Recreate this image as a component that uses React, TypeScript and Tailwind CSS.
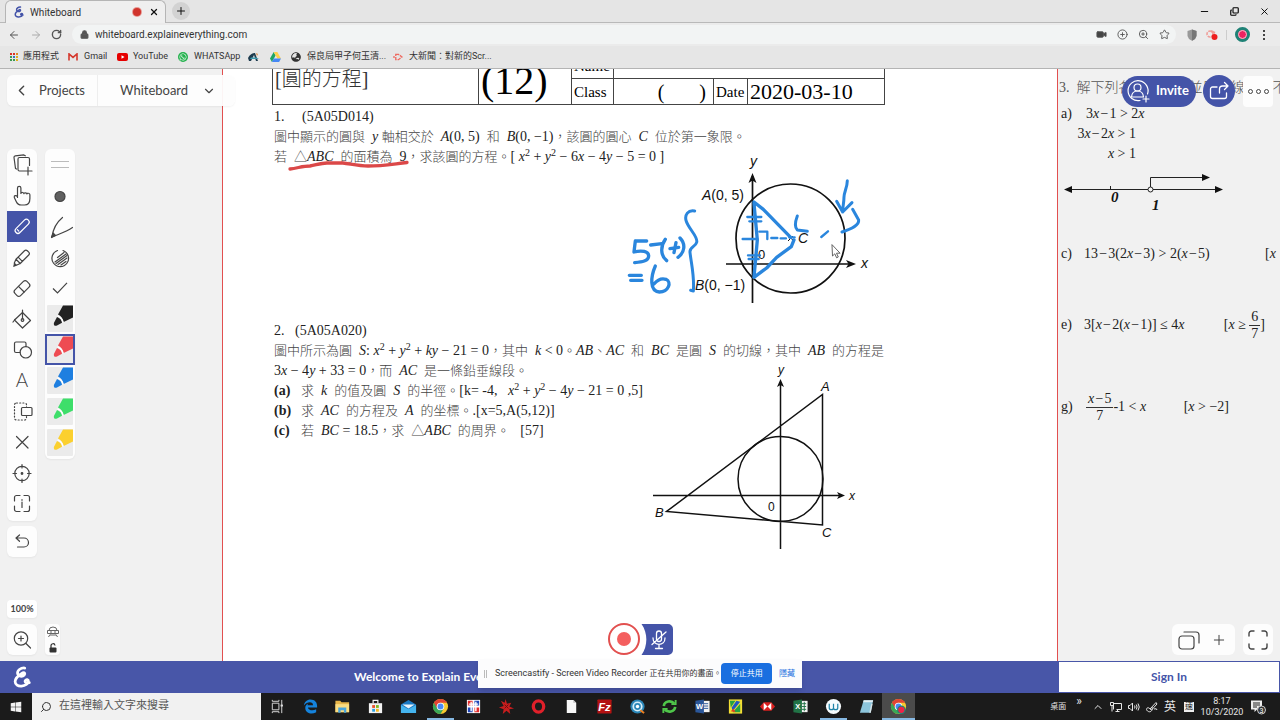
import React from "react";
import {
  ArrowLeft,
  ArrowRight,
  ChevronDown,
  ChevronLeft,
  ChevronUp,
  CirclePlus,
  Copy,
  Lock,
  Minus,
  Plus,
  RotateCw,
  Search,
  Star,
  Video,
  X,
  ZoomIn,
} from "lucide-react";
import { FaGlobeAsia, FaWhatsapp, FaWindows } from "react-icons/fa";

/* ---------- shared bits ---------- */

const I = ({ children }: { children: React.ReactNode }) => <i className="italic">{children}</i>;

// Chinese runs are set a touch smaller and lighter than the Latin text around them
const Zh = ({ children }: { children: React.ReactNode }) => <span className="text-[13px] text-[#444]">{children}</span>;

const Sq = () => <sup className="text-[10px]">2</sup>;

// minus sign with hair spaces
const Mn = () => <>{"\u200a−\u200a"}</>;

function Swirl({ className }: { className: string }) {
  return (
    <svg viewBox="0 0 20 24" className={className} fill="none" stroke="currentColor" strokeWidth="3" strokeLinecap="round">
      <path d="M13 2.200C8.500 1.800 4.600 5 5.200 8.300c.5 3 5 4 7.300 1.500 1.300-1.600 0-3.200-1.500-2.400C7.500 9.500 2.500 12.500 2.500 17c0 3.500 3.200 5.200 7 4.900 4-.3 7.500-2.800 7.500-5.400 0-1.800-2.300-2.200-3.300-.6-.9 1.500.4 2.900 4.300 2.300" />
    </svg>
  );
}

function ChromeLogo({ className }: { className?: string }) {
  return (
    <svg viewBox="0 0 18 18" className={className}>
      <circle cx="9" cy="9" r="8" fill="#f7c92f" />
      <path d="M2.070 5A8 8 0 0 0 9 17l3.500-6L9 9z" fill="#3aa757" />
      <path d="M9 5h6.930A8 8 0 0 0 2.070 5l3.500 6z" fill="#e24435" />
      <circle cx="9" cy="9" r="4" fill="#fff" />
      <circle cx="9" cy="9" r="3.100" fill="#4a8af4" />
    </svg>
  );
}

/* ---------- browser ---------- */

function TabStrip() {
  return (
    <div className="flex h-[23px] items-end justify-between border-b border-[#b9b9b9] bg-[#e5e5e5]">
      <div className="flex items-center gap-1.5 pl-[5px]">
        <div className="-mb-px flex h-[23px] w-[161px] items-center rounded-t-md border border-b-0 border-[#b5b5b5] bg-[#efefef] pl-2 pr-1.5">
          <Swirl className="h-3 w-2.5 text-[#4353a8]" />
          <span className="ml-1.5 flex-1 text-[10px] text-[#333]">Whiteboard</span>
          <span className="mr-2 flex size-2 items-center justify-center rounded-full bg-[#d0342c] ring-1 ring-[#e79a95]" />
          <button aria-label="Close tab"><X size={10} strokeWidth={3} color="#111" /></button>
        </div>
        <button aria-label="New tab" className="flex size-[18px] items-center justify-center rounded-full bg-[#d2d2d2]">
          <Plus size={12} strokeWidth={2} color="#111" />
        </button>
      </div>
      <div className="flex h-full items-center gap-5 pr-2.5">
        <button aria-label="Minimize"><Minus size={11} strokeWidth={2} /></button>
        <button aria-label="Restore"><Copy size={9} strokeWidth={3} className="-scale-x-100 rotate-180" /></button>
        <button aria-label="Close"><X size={11} strokeWidth={2} /></button>
      </div>
    </div>
  );
}

function AddressBar() {
  return (
    <div className="flex h-[23px] items-center bg-[#ebebeb] pl-2 pr-2.5 text-[#555]">
      <button aria-label="Back" className="w-[22px]"><ArrowLeft size={12} /></button>
      <button aria-label="Forward" className="w-[21px]"><ArrowRight size={12} color="#aaa" /></button>
      <button aria-label="Reload" className="w-[21px]"><RotateCw size={11} strokeWidth={3} /></button>
      <label className="flex h-[19px] flex-1 items-center rounded-full bg-[#f2f4f4] pl-2">
        <Lock size={9} fill="#555" strokeWidth={3} />
        <input
          aria-label="Address"
          defaultValue="whiteboard.explaineverything.com"
          className="ml-1.5 flex-1 bg-transparent text-[10px] text-[#333] outline-none"
        />
        <span className="flex items-center gap-[10px] pr-1.5">
          <Video size={11} fill="#444" />
          <CirclePlus size={11} />
          <ZoomIn size={11} />
          <Star size={11} />
        </span>
      </label>
      <div className="ml-2.5 flex items-center gap-2">
        <svg viewBox="0 0 12 12" className="size-3"><path d="M6 .5 10.500 2v5L9 10l-3 1.800L3 10 1.500 7V2z" fill="#999" /><path d="M6 .5v11.300L9 10l1.500-3V2z" fill="#777" /></svg>
        <svg viewBox="0 0 12 12" className="size-3"><circle cx="4" cy="5" r="3" fill="none" stroke="#f09a95" strokeWidth="1.500" strokeDasharray="3 1" /><path d="m5 2 4 2" stroke="#f09a95" strokeWidth="2" /><circle cx="8.500" cy="8" r="3" fill="#ee1c1c" /></svg>
        <span className="h-2.5 w-px bg-[#ccc]" />
        <span className="size-[15px] rounded-full border-[3px] border-[#1f8276] bg-[#ee2260] outline-1 -outline-offset-4 outline-[#f5c5cf]" />
        <button aria-label="Menu" className="flex w-3 flex-col items-center gap-0.5">
          <span className="size-0.5 bg-[#444]" /><span className="size-0.5 bg-[#444]" /><span className="size-0.5 bg-[#444]" />
        </button>
      </div>
    </div>
  );
}

const DOTS = ["#d93025", "#d93025", "#e08a20", "#3a9a50", "#3a70c0", "#e0b020", "#3a9a50", "#3a9a50", "#e0b020"];

function Bookmarks() {
  return (
    <nav className="flex h-[23px] items-center whitespace-nowrap border-b border-[#b4b4b4] bg-[#e6e6e6] pl-2.5 text-[9px] text-[#333]">
      <a href="#apps" className="flex w-[58px] items-center gap-[5px]">
        <span className="grid grid-cols-3 gap-px">
          {DOTS.map((c, i) => <span key={i} className="size-0.5" style={{ background: c }} />)}
        </span>
        應用程式
      </a>
      <a href="#gmail" className="flex w-[49px] items-center gap-1.5">
        <svg viewBox="0 0 11 9" className="h-2 w-2.5"><path d="M1 8.500V1l4.500 4L10 1v7.500" fill="none" stroke="#d5392e" strokeWidth="1.800" /></svg>
        Gmail
      </a>
      <a href="#youtube" className="flex w-[61px] items-center gap-[5px]">
        <svg viewBox="0 0 11 8" className="h-2 w-[11px]"><rect width="11" height="8" rx="2" fill="#e60000" /><path d="M4.500 2.300 7.500 4l-3 1.700z" fill="#fff" /></svg>
        YouTube
      </a>
      <a href="#whatsapp" className="flex w-[70px] items-center gap-1.5">
        <span className="flex size-[10px] items-center justify-center rounded-full bg-[#22b14c]"><FaWhatsapp size={8} color="#fff" /></span>
        WHATSApp
      </a>
      <a href="#class" aria-label="Class" className="w-[22px]">
        <svg viewBox="0 0 12 10" className="h-2.5 w-3"><path d="M0 6c2-4 5-5 7-5l3 8H8L6 3 3 9H1z" fill="#1d3b4e" /><path d="M3 5.500h5l3 1.500H2z" fill="#3e9cb0" /><path d="m8 1 2 1-1 2z" fill="#e08a40" /></svg>
      </a>
      <a href="#drive" aria-label="Drive" className="w-[21px]">
        <svg viewBox="0 0 11 10" className="h-2.5 w-[11px]"><path d="M3.700 0 0 6.500 1.900 10l3.700-6.600z" fill="#1fa463" /><path d="M3.700 0h3.600L11 6.500H7.400z" fill="#ffd04b" /><path d="m1.900 10 1.900-3.500H11L9.100 10z" fill="#4688f4" /></svg>
      </a>
      <a href="#school" className="flex w-[102px] items-center gap-1.5"><FaGlobeAsia size={10} /> 保良局甲子何玉清...</a>
      <a href="#news" className="flex items-center gap-1.5">
        <svg viewBox="0 0 11 9" className="h-2 w-2.5" fill="none" stroke="#ee6a60" strokeWidth="1.500"><path d="M3 1.500h3l4 3-4 3H3z" strokeDasharray="4 1" /><path d="M0 4.500h2" /></svg>
        大新聞：對新的Scr...
      </a>
    </nav>
  );
}

/* ---------- tool palettes ---------- */

const TOOLS: { name: string; icon: React.ReactNode }[] = [
  { name: "Add", icon: <path d="M22.500 16.500V10A1.500 1.500 0 0 0 21 8.500h-8.500A1.500 1.500 0 0 0 11 10v10.500a1.500 1.500 0 0 0 1.500 1.500H17M9.500 20l-1-.5L7 8.500A1.500 1.500 0 0 1 8.300 6.900l8.500-1 1.500.9M21 18v8M17 22h8" /> },
  { name: "Hand", icon: <path d="M10.500 17.500V8a1.700 1.700 0 0 1 3.400 0v5.500c0-1.500 3-1.300 3 .2 0-1.200 3-1.200 3 .3 0-1.200 3-1 3 .8v3.700c0 4-2.200 6.500-5.400 6.500h-3c-2.800 0-4.300-1-5.300-3.500l-1.900-4c-.4-2 1.400-2.500 3.200-1" /> },
  { name: "Pencil", icon: <g transform="rotate(-45 15 15.500)"><rect x="6.500" y="12.700" width="17.500" height="5.600" rx="2.800" /><path d="M9.500 14.500v2" /></g> },
  { name: "Highlighter", icon: <g transform="rotate(-45 15 15.500)"><path d="M9.500 12.500h12a2 2 0 0 1 2 2v2a2 2 0 0 1-2 2h-12zM9.500 12.500l-4 1.500v3l4 1.500M12.500 12.500v6M5.500 14.500 3 16l2.500 .8" /></g> },
  { name: "Eraser", icon: <g transform="rotate(-45 15 15.500)"><rect x="6.500" y="11.500" width="17" height="8" rx="2.500" /><path d="M14 11.500v8" /></g> },
  { name: "Fill", icon: <><path d="M15.500 8.500 23.500 16.500 15.500 24 7.500 16z" /><path d="M15.500 6v9M8 15.500l-2 2.500" /><circle cx="15.500" cy="16" r="1.300" /></> },
  { name: "Shapes", icon: <><path d="M13 17.500H9A1.500 1.500 0 0 1 7.500 16V8.500A1.500 1.500 0 0 1 9 7h8.500A1.500 1.500 0 0 1 19 8.500v3" /><circle cx="18.800" cy="17.300" r="5.700" /></> },
  { name: "Text", icon: <text x="15" y="20.500" textAnchor="middle" fontSize="19" fill="currentColor" stroke="none" fontFamily="Lato" fontWeight="300">A</text> },
  { name: "Select", icon: <><rect x="7.500" y="6" width="12" height="17" rx="2" strokeDasharray="1 2.200" /><rect x="14.500" y="10.500" width="10.500" height="8" rx="1" fill="#fdfdfd" /></> },
  { name: "Delete", icon: <path d="m9.500 8.500 11.500 11.500M21 8.500 9.500 20" /> },
  { name: "Laser", icon: <><circle cx="15" cy="14.500" r="7.200" /><path d="M15 5.500V9M15 20v3.500M6 14.500h3.500M20.500 14.500H24" /><circle cx="15" cy="14.500" r=".8" fill="currentColor" /></> },
  { name: "Inspector", icon: <><path d="M7.500 11V7.500a2 2 0 0 1 2-2H13M17 5.500h3.500a2 2 0 0 1 2 2V11M22.500 16v3.500a2 2 0 0 1-2 2H17M13 21.500H9.500a2 2 0 0 1-2-2V16" /><path d="M15 12v5.500M15 9.500v.8" /></> },
];

const COLORS = ["#222222", "#ee4b52", "#1e7fe0", "#3ede6a", "#fbd02f"];

function ToolButton({ name, icon, active }: { name: string; icon: React.ReactNode; active?: boolean }) {
  return (
    <button aria-label={name} className={active ? "block bg-[#4454a8] text-white" : "block text-[#444]"}>
      <svg viewBox="0 0 30 31" className="h-[31px] w-[30px]" fill="none" stroke="currentColor" strokeWidth="1.200" strokeLinecap="round" strokeLinejoin="round">
        {icon}
      </svg>
    </button>
  );
}

function Palettes() {
  return (
    <div className="flex h-full items-start gap-2 pl-[7px] pt-20">
      <div className="flex h-full w-[30px] flex-col pb-1.5">
        <div className="rounded-md bg-[#fdfdfd] shadow-xs">
          {TOOLS.map((t) => <ToolButton key={t.name} {...t} active={t.name === "Pencil"} />)}
        </div>
        <div className="mt-[5px] rounded-md bg-[#fdfdfd] shadow-xs">
          <ToolButton name="Undo" icon={<path d="M12.500 9 9 12l3.500 3.300M9.500 12H17a4.500 4.500 0 0 1 0 9h-6.500" />} />
        </div>
        <div className="mt-auto flex h-[18px] items-center justify-center rounded bg-white font-[Lato] text-[9px] font-bold text-[#444] shadow-xs">100%</div>
        <div className="mt-1.5 rounded-md bg-[#fdfdfd] shadow-xs">
          <ToolButton name="Zoom" icon={<><circle cx="14" cy="14.500" r="6.700" /><path d="m19 19.500 4.500 4.500M14 12v5M11.500 14.500h5" /></>} />
        </div>
      </div>

      <div className="flex h-full flex-col justify-between pb-1.5">
        <div className="w-[30px] rounded-md bg-[#fdfdfd] pb-px shadow-xs">
          <div className="flex h-[31px] flex-col items-center justify-center gap-[5px]">
            <span className="h-px w-[18px] bg-[#bbb]" />
            <span className="h-px w-[18px] bg-[#bbb]" />
          </div>
          <ToolButton name="Size" icon={<circle cx="15" cy="16.500" r="5" fill="#606060" />} />
          <ToolButton name="Stroke" icon={<><path d="M7 26C8 18 12 11 17.500 6.500M7 26c7-3 14-5 20.500-9.500" /><path d="M6.500 26.500 8 22l2.500 2.500z" fill="currentColor" /></>} />
          <ToolButton name="Opacity" icon={<><path d="M12.500 8.500A8.300 8.300 0 1 0 18 8.500" /><path d="m10 20 11-8M11 21.500l11-8M13 22.500l9-6.500M12.500 15.500 19 10.500M16 23l5-3.500" /></>} />
          <button aria-label="Shape recognition" className="flex h-[30px] w-full items-center justify-center text-[#444]">
            <svg viewBox="0 0 16 12" className="h-3 w-4" fill="none" stroke="currentColor" strokeWidth="1.200"><path d="M1 6.500 5.500 11 15 .8" /></svg>
          </button>
          {COLORS.map((c, i) => (
            <button
              key={c}
              aria-label={"Color " + c}
              className={
                i === 1
                  ? "flex h-[31px] w-full items-center justify-center border-2 border-[#4454a8] bg-white"
                  : "flex h-[31px] w-full items-center justify-center"
              }
            >
              <svg viewBox="0 0 26 27" className="h-[27px] w-[26px] shrink-0">
                <rect width="26" height="27" rx="1" fill="#ebebeb" />
                <path d="M11 9.500 16 .5h10v12L16.700 17C15.900 13.500 14 11 11 9.500z" fill={c} />
                <path d="M10 12c3 1 4.500 3 5 5.800l-5 2.700c-2.200 1-3.800-.5-3-2.800z" fill={c} />
                <path d="M10.500 10.800c3.200 1.200 5 3.700 5.500 6.700" fill="none" stroke="#fff" strokeWidth="1.400" />
              </svg>
            </button>
          ))}
        </div>
        <div className="flex h-[31px] w-[15px] flex-col items-center justify-around rounded bg-[#fdfdfd] shadow-xs">
          <svg viewBox="0 0 12 12" className="size-3" fill="none" stroke="#666" strokeWidth="1"><path d="M2 4.500a4 3.500 0 0 1 8 0M.5 4.500h11v3H.5zM3 6h2M7 6h2M3 8.500 1.500 11M9 8.500l1.500 2.500M3 9h6" /></svg>
          <svg viewBox="0 0 10 10" className="size-2.5"><path d="M3 5V3a2 2 0 0 1 4-.5" fill="none" stroke="#333" strokeWidth="1.200" /><rect x="1.500" y="4.500" width="7" height="5" rx="1" fill="#333" /></svg>
        </div>
      </div>
    </div>
  );
}

/* ---------- worksheet ---------- */

function CircleFigure() {
  return (
    <svg viewBox="690 147 185 173" className="h-[173px] w-[185px] font-['Liberation_Sans'] text-[14px]" fill="none" stroke="#111" strokeWidth="1.700">
      <circle cx="790.500" cy="238.500" r="54.500" />
      <path d="M752.500 303V176M726 264h127" />
      <path d="m752.500 173-4 10 4-2.500 4 2.500zM856 264l-10-4 2.500 4-2.500 4z" fill="#111" stroke="none" />
      <path d="m788 236 5 4M788 241l5-5" strokeWidth="1" />
      <g fill="#111" stroke="none">
        <text x="750" y="166" fontStyle="italic">y</text>
        <text x="861" y="268" fontStyle="italic">x</text>
        <text x="702" y="200"><tspan fontStyle="italic">A</tspan>(0, 5)</text>
        <text x="695" y="290"><tspan fontStyle="italic">B</tspan>(0, −1)</text>
        <text x="798" y="243" fontStyle="italic">C</text>
        <text x="758" y="259" fontSize="13">0</text>
      </g>
    </svg>
  );
}

function TriangleFigure() {
  return (
    <svg viewBox="650 361 210 195" className="h-[195px] w-[210px] font-['Liberation_Sans'] text-[13px]" fill="none" stroke="#111" strokeWidth="1.500">
      <circle cx="780.500" cy="479" r="42.500" />
      <path d="M780.500 549V382M653 495.500h189M822.500 394.500V525L666.500 511.500z" />
      <path d="m780.500 379-3.500 8 3.500-2 3.500 2zM845 495.500l-8-3.500 2 3.500-2 3.500z" fill="#111" stroke="none" />
      <g fill="#111" stroke="none">
        <text x="778" y="374" fontSize="12" fontStyle="italic">y</text>
        <text x="849" y="500" fontSize="12" fontStyle="italic">x</text>
        <text x="821" y="391" fontStyle="italic">A</text>
        <text x="655" y="517" fontStyle="italic">B</text>
        <text x="822" y="537" fontStyle="italic">C</text>
        <text x="768" y="511" fontSize="12">0</text>
      </g>
    </svg>
  );
}

function Worksheet() {
  return (
    <article className="flex w-[661px] flex-col pl-[51px] font-['Liberation_Serif','Noto_Sans_CJK_TC',serif] text-[14px] leading-5 font-light text-[#222] whitespace-pre">
      <table className="-ml-0.5 -mt-[17px] h-[53px] w-[613px] table-fixed border-collapse text-[15px] text-black [&_td]:border [&_td]:border-[#444] [&_td]:px-0.5">
        <colgroup>
          <col className="w-[206px]" /><col className="w-[93px]" /><col className="w-[42px]" />
          <col className="w-[100px]" /><col className="w-[34px]" /><col />
        </colgroup>
        <tbody>
          <tr className="h-[26px]">
            <td rowSpan={2} className="text-[20px] text-[#333]">[圓的方程]</td>
            <td rowSpan={2} className="pt-1 text-[40px] leading-10">(12)</td>
            <td className="leading-4">Name</td>
            <td colSpan={3} />
          </tr>
          <tr className="h-[26px]">
            <td>Class</td>
            <td className="text-right text-[20px]">(       ) </td>
            <td>Date</td>
            <td className="text-[22px]">2020-03-10</td>
          </tr>
        </tbody>
      </table>

      <p className="mt-0.5">1.     (5A05D014)</p>
      <p><Zh>圖中顯示的圓與</Zh>  <I>y</I> <Zh>軸相交於</Zh>  <I>A</I>(0, 5)  <Zh>和</Zh>  <I>B</I>(0, −1)<Zh>，該圓的圓心</Zh>  <I>C</I>  <Zh>位於第一象限。</Zh></p>
      <div className="flex h-[173px]">
        <p className="w-[416px]"><Zh>若</Zh>  <Zh>△</Zh><I>ABC</I>  <Zh>的面積為</Zh>  9<Zh>，求該圓的方程。</Zh>[ <I>x</I><Sq /> + <I>y</I><Sq /> − 6<I>x</I> − 4<I>y</I> − 5 = 0 ]</p>
        <CircleFigure />
      </div>

      <p className="mt-px">2.   (5A05A020)</p>
      <p><Zh>圖中所示為圓</Zh>  <I>S</I>: <I>x</I><Sq /> + <I>y</I><Sq /> + <I>ky</I> − 21 = 0<Zh>，其中</Zh>  <I>k</I> &lt; 0<Zh>。</Zh><I>AB</I><Zh>、</Zh><I>AC</I>  <Zh>和</Zh>  <I>BC</I>  <Zh>是圓</Zh>  <I>S</I>  <Zh>的切線，其中</Zh>  <I>AB</I>  <Zh>的方程是</Zh></p>
      <div className="flex">
        <div className="w-[376px]">
          <p>3<I>x</I> − 4<I>y</I> + 33 = 0<Zh>，而</Zh>  <I>AC</I>  <Zh>是一條鉛垂線段。</Zh></p>
          <p className="flex"><b className="w-[27px] font-bold">(a)</b><span><Zh>求</Zh>  <I>k</I>  <Zh>的值及圓</Zh>  <I>S</I>  <Zh>的半徑。</Zh>[k= -4,   <I>x</I><Sq /> + <I>y</I><Sq /> − 4<I>y</I> − 21 = 0 ,5]</span></p>
          <p className="flex"><b className="w-[27px] font-bold">(b)</b><span><Zh>求</Zh>  <I>AC</I>  <Zh>的方程及</Zh>  <I>A</I>  <Zh>的坐標。</Zh>.[x=5,A(5,12)]</span></p>
          <p className="flex"><b className="w-[27px] font-bold">(c)</b><span><Zh>若</Zh>  <I>BC</I> = 18.5<Zh>，求</Zh>  <Zh>△</Zh><I>ABC</I>  <Zh>的周界。</Zh>   [57]</span></p>
        </div>
        <TriangleFigure />
      </div>
    </article>
  );
}

function Ink() {
  return (
    <svg viewBox="223 69 680 300" className="pointer-events-none absolute left-0 top-0 h-[300px] w-[680px]" fill="none" strokeLinecap="round" strokeLinejoin="round">
      <path d="M290 169c8-1 13-3 20-3 6-1 11-3 17-3h16c8 1 16 3 25 3 14 0 25-2 39-3.500" stroke="#db4848" strokeWidth="3.300" />
      {/* handwriting over the first figure */}
      <g transform="translate(600 140) scale(.3333)" stroke="#2a86dd" strokeWidth="10">
        <path d="M462 190 472 300 462 412M462 186l28 22 82 84M462 412l38-28 30-32 44-32 8-20" />
        <path d="M442 231h42M448 244h36M444 346h36M446 357h30M428 297h44M478 275h24v22M514 294h18M542 295h16M568 292h16M664 291l20-17" strokeWidth="7" />
        <path d="M592 228c-6 16-8 34 0 42l30 4M742 122c0 20-10 34-10 50s-4 28-4 44M710 184l18 32 28-28M758 208l18 32c2 16-20 26-50 36" strokeWidth="9" />
        <path d="M284 213c-20-4-30 12-26 28 6 24 38 50 32 66-4 14-22 14-20 30 4 36 14 74 10 116l-8-2" strokeWidth="9" />
        <path d="M106 303 102 336c24-6 44-2 44 12 0 16-22 18-42 20M108 303h32M152 315l34-4M196 298c-14 20-16 48 4 64M210 326l26-4M228 308l-6 30M240 294c18 18 14 44-6 58" />
        <path d="M88 406h36M92 421h34M166 378c-14 32-18 76 12 78 28 0 38-30 20-38-12-4-26 2-36 14" />
      </g>
      <path d="m832 245 .5 11 2.300-2.200 1.800 4 1.700-.8-1.800-3.800h3.200z" fill="#fff" stroke="#555" strokeWidth=".9" />
    </svg>
  );
}

function Frac({ top, bottom }: { top: React.ReactNode; bottom: React.ReactNode }) {
  return (
    <span className="inline-flex flex-col items-center leading-4">
      <span className="border-b border-[#333] px-0.5">{top}</span>
      <span>{bottom}</span>
    </span>
  );
}

function Exercises() {
  return (
    <div className="h-full overflow-hidden whitespace-pre pl-px pt-[9px] font-['Liberation_Serif','Noto_Sans_CJK_TC',serif] text-[14px] leading-5 font-light text-[#222]">
      <p className="text-[#555]">3.  解下列各不等式，並用數線表示不</p>
      <p className="mt-1.5 flex pl-0.5"><span className="w-[25px]">a)</span><span>3<I>x</I><Mn />1 &gt; 2<I>x</I></span></p>
      <p className="w-[77px] text-right">3<I>x</I><Mn />2<I>x</I> &gt; 1</p>
      <p className="w-[77px] text-right"><I>x</I> &gt; 1</p>
      <svg viewBox="1059 164 170 50" className="h-[50px] w-[170px] text-[15px]" fill="none" stroke="#222">
        <path d="M1070 189.500h147M1110.500 186v4M1150.500 187v-9.500h53" />
        <path d="m1064 189.500 8-3.500v7zM1223 189.500l-8-3.500v7zM1210 177.500l-8-3.500v7z" fill="#111" stroke="none" />
        <circle cx="1150.500" cy="189.500" r="2.500" fill="#f2f2f2" />
        <g fill="#111" stroke="none" fontStyle="italic" fontWeight="700">
          <text x="1111" y="202">0</text>
          <text x="1152" y="210">1</text>
        </g>
      </svg>
      <p className="mt-[30px] flex w-[219px] justify-between pl-0.5 pr-0.5">
        <span className="flex"><span className="w-[23px]">c)</span><span>13<Mn />3(2<I>x</I><Mn />3) &gt; 2(<I>x</I><Mn />5)</span></span>
        <span>[<I>x</I></span>
      </p>
      <p className="mt-11 flex h-[34px] w-[206px] items-center justify-between pl-0.5">
        <span className="flex"><span className="w-[23px]">e)</span><span>3[<I>x</I><Mn />2(<I>x</I><Mn />1)] ≤ 4<I>x</I></span></span>
        <span className="flex items-center">[<I>x</I> ≥ <Frac top="6" bottom="7" />]</span>
      </p>
      <p className="mt-12 flex h-[34px] w-[170px] items-center justify-between pl-0.5">
        <span className="flex items-center"><span className="w-[25px]">g)</span><Frac top={<><I>x</I><Mn />5</>} bottom="7" />-1 &lt; <I>x</I></span>
        <span>[<I>x</I> &gt; −2]</span>
      </p>
    </div>
  );
}

function FloatingControls() {
  return (
    <>
      <div className="absolute left-[7px] top-1.5 flex h-[31px] items-center rounded-md bg-[#fdfdfd]/95 font-[Lato] text-[13px] text-[#444] shadow-xs">
        <button className="flex h-full w-[91px] items-center gap-[9px] border-r border-[#eee] pl-1.5"><ChevronLeft size={17} strokeWidth={2} />Projects</button>
        <button className="flex h-full w-[137px] items-center gap-3.5 pl-[22px]">Whiteboard<ChevronDown size={14} strokeWidth={2} /></button>
      </div>

      <div className="absolute right-[7px] top-1.5 flex items-center font-[Lato] text-white">
        <button className="flex h-[31px] w-[74px] items-center gap-1.5 rounded-full bg-[#4454a8] pl-1 text-[13px] font-bold">
          <svg viewBox="0 0 24 24" className="size-6" fill="none" stroke="currentColor" strokeWidth="1.200" strokeLinecap="round">
            <path d="M14 21.500A10 10 0 1 1 21.500 15M17 20h6M20 17v6" /><circle cx="11.500" cy="8.500" r="3.500" /><path d="M5.500 18c.3-4 2.500-6 6-6s5.700 2 6 6z" />
          </svg>
          Invite
        </button>
        <button aria-label="Share" className="ml-[7px] flex size-8 items-center justify-center rounded-full bg-[#4454a8]">
          <svg viewBox="0 0 20 20" className="size-5" fill="none" stroke="currentColor" strokeWidth="1.300" strokeLinecap="round" strokeLinejoin="round">
            <path d="M8 6H3.500A2 2 0 0 0 1.500 8v7.500a2 2 0 0 0 2 2h12a2 2 0 0 0 2-2V12M10.500 12V8a3 3 0 0 1 3-3H19M15.500 1.500 19 5l-3.500 3.500" />
          </svg>
        </button>
        <button aria-label="More" className="ml-2 flex h-[31px] w-[30px] items-center justify-center gap-[3px] rounded bg-[#fdfdfd]">
          <span className="size-[5px] rounded-full border border-[#444]" /><span className="size-[5px] rounded-full border border-[#444]" /><span className="size-[5px] rounded-full border border-[#444]" />
        </button>
      </div>

      <div className="absolute inset-x-0 bottom-1.5 flex justify-center">
        <button aria-label="Record" className="flex size-8 items-center justify-center rounded-full border-2 border-[#e2504f] bg-white">
          <span className="size-3.5 rounded-full bg-[#f45f5f]" />
        </button>
        <button aria-label="Microphone">
          <svg viewBox="0 0 33 31" className="h-[31px] w-[33px]" fill="none">
            <path d="M1.500 0H28a5 5 0 0 1 5 5v21a5 5 0 0 1-5 5H1.500C8 22 8 9 1.500 0z" fill="#4454a8" />
            <g stroke="#fff" strokeWidth="1.300" strokeLinecap="round"><rect x="16.500" y="7" width="5" height="10.500" rx="2.500" /><path d="M13 14c0 8.500 12 8.500 12 0M19 20.500V24M15.500 24.500h7M12 20.500 26 8" /></g>
          </svg>
        </button>
      </div>

      <div className="absolute bottom-1.5 right-[7px] flex gap-2 text-[#444]">
        <div className="flex h-[31px] w-[63px] items-center justify-between rounded-md bg-[#fdfdfd] pl-1.5 pr-2">
          <button aria-label="Slides">
            <svg viewBox="0 0 22 20" className="h-5 w-[22px]" fill="none" stroke="currentColor" strokeWidth="1.200" strokeLinecap="round"><rect x="1" y="6" width="15" height="13" rx="3" /><path d="M6 2h12a3 3 0 0 1 3 3v8" /></svg>
          </button>
          <button aria-label="Add slide"><Plus size={16} strokeWidth={1.5} /></button>
        </div>
        <button aria-label="Fullscreen" className="flex h-[31px] w-[30px] items-center justify-center rounded-md bg-[#fdfdfd]">
          <svg viewBox="0 0 20 20" className="size-5" fill="none" stroke="currentColor" strokeWidth="1.400" strokeLinecap="round"><path d="M1 6V3.500A2.500 2.500 0 0 1 3.500 1H6M14 1h2.500A2.500 2.500 0 0 1 19 3.500V6M19 14v2.500a2.500 2.500 0 0 1-2.500 2.500H14M6 19H3.500A2.500 2.500 0 0 1 1 16.500V14" /></svg>
        </button>
      </div>
    </>
  );
}

/* ---------- taskbar ---------- */

const APPS: { name: string; open?: boolean; active?: boolean; icon: React.ReactNode }[] = [
  { name: "Task View", icon: <g fill="none" stroke="#ddd"><path d="M3.500 5.500h7v7h-7zM3.500 2v1.500h7V2M3.500 16v-1.500h7V16M13.500 2v14" /><path d="M13.500 7v2" strokeWidth="2.500" /></g> },
  { name: "Edge", icon: <path d="M2 8c.5-4 3.300-6.500 7-6.500 4.500 0 7 3 7 7V10H6.300c.3 3 5 4 8.700 2v3c-5 2.800-11 1-11.500-4C3.200 8.500 4.500 6.800 6.800 5.800 5.800 6.600 5.900 7 5.900 7.600h5.800C11.700 3.600 5.500 3.500 2 8z" fill="#1583dc" /> },
  { name: "Explorer", icon: <><path d="M1.500 3h5l1.500 1.500h8V15h-14.500z" fill="#e8b64a" /><path d="M1.500 6.500h14.500V15H1.500z" fill="#fadd83" /><path d="M4.500 10h8.500v5.500h-2.500V13H7v2.500H4.500z" fill="#4aa5dc" /></> },
  { name: "Store", icon: <><path d="M2 5.500h14V16H2z" fill="#f3f3f3" /><path d="M6.500 5.500V2.500h5v3" fill="none" stroke="#f3f3f3" strokeWidth="1.300" /><path d="M5.500 7.500h3v3h-3z" fill="#e8502a" /><path d="M9.500 7.500h3v3h-3z" fill="#7fba20" /><path d="M5.500 11.500h3v3h-3z" fill="#2aa0e0" /><path d="M9.500 11.500h3v3h-3z" fill="#f5b820" /></> },
  { name: "Mail", icon: <><path d="M1 7 9 2l8 5v9H1z" fill="#1a78c2" /><path d="m2.500 7 6.500 4 6.500-4z" fill="#e9f3fa" /><path d="M1 7.500 9 12l8-4.500V16H1z" fill="#44b4ee" /></> },
  { name: "Chrome", open: true, icon: <ChromeLogo /> },
  { name: "Input", icon: <><path d="M2 2h14v14H2z" fill="#fff" /><path d="M3 3h5v5H3zM10 10h5v5h-5z" fill="#e32b2b" /><path d="M10 3h5v5h-5zM3 10h5v5H3z" fill="#1e45b8" /><path d="M4 6.500h10M6.500 4v10M11.500 4v10" stroke="#fff" strokeWidth="1.500" /></> },
  { name: "Mathematica", icon: <><path d="m8 1 1.500 5L14 5l-2 4 5 2-5 1 1 5-4-3.500L5 17l1-5-5-2 5-1.500L3 3l4 2z" fill="#c81e1e" /><path d="m7 7 4 4M11 7l-4 4" stroke="#6e0d0d" /></> },
  { name: "Opera", icon: <ellipse cx="9" cy="9" rx="5.500" ry="6" fill="none" stroke="#e0202a" strokeWidth="3.500" /> },
  { name: "File", icon: <><path d="M4 2h7l3 3v11H4z" fill="#f7f7f7" /><path d="M11 2v3h3z" fill="#bbb" /></> },
  { name: "FileZilla", icon: <><rect x="1.500" y="1.500" width="15" height="15" rx="1" fill="#b31212" /><text x="9" y="13.500" textAnchor="middle" fontSize="12" fontWeight="700" fontStyle="italic" fill="#fff" fontFamily="Liberation Sans">Fz</text></> },
  { name: "Viewer", icon: <><circle cx="9" cy="9" r="7.500" fill="#2a86b8" /><circle cx="9" cy="9" r="4.500" fill="none" stroke="#d5edf8" strokeWidth="1.800" /><circle cx="9" cy="9" r="1.800" fill="#fff" /><path d="m12 13 4 3" stroke="#f08020" strokeWidth="2" /></> },
  { name: "Sync", icon: <g fill="none" stroke="#4fc64a" strokeWidth="2.800"><path d="M3 8.500C3.500 3 11 2 14 6M15 9.500C14.500 15 7 16 4 12" /><path d="M15.500 2v4.500H11M2.500 16v-4.500H7" strokeWidth="2" /></g> },
  { name: "Word", icon: <><path d="M9 3h7.500v12H9z" fill="#f2f2f2" /><path d="M10.500 6H15M10.500 8.500H15M10.500 11H15" stroke="#2b579a" /><path d="m1.500 3 9-1.500v15l-9-1.500z" fill="#2b579a" /><text x="6" y="12" textAnchor="middle" fontSize="8" fontWeight="700" fill="#fff" fontFamily="Liberation Sans">W</text></> },
  { name: "Geometry", icon: <><path d="M2 1.500h14v15H2z" fill="#f5df34" /><path d="M3 3h6L4 10zM14 6v9H6z" fill="#25a244" /><path d="m10 3 4 1-8 10-1-4z" fill="#1f58c4" /><path d="m4 14 3-3 2 4z" fill="#e04020" /></> },
  { name: "HSBC", icon: <><path d="m5 4.500h8L17 9l-4 4.500H5L1 9z" fill="#d9201f" /><path d="M5 5v8l4-4zM13 5v8L9 9z" fill="#fff" /></> },
  { name: "Excel", icon: <><path d="M9 3h7.500v12H9z" fill="#f2f2f2" /><path d="M10.500 6H15M10.500 9H15M10.500 12H15M13 4v10" stroke="#217346" /><path d="m1.500 3 9-1.500v15l-9-1.500z" fill="#217346" /><text x="6" y="12" textAnchor="middle" fontSize="8" fontWeight="700" fill="#fff" fontFamily="Liberation Sans">X</text></> },
  { name: "WordWeb", open: true, icon: <><circle cx="9" cy="9" r="8" fill="#f6fbfd" /><path d="M4.500 6v4.500c0 2.500 4.500 2.500 4.500 0V6v4.500c0 2.500 4.500 2.500 4.500 0V6" fill="none" stroke="#1f84a8" strokeWidth="1.300" /></> },
  { name: "Notepad", icon: <><path d="M6 2.500h10l-2.500 13H2z" fill="#8cc5dc" /><path d="m6 2.500 10 0-.5 2H5.500z" fill="#e4f0f4" /><path d="m14 6 1.500 0-2 9.500h-1.500z" fill="#d9e4e8" /></> },
  { name: "Chrome recording", open: true, active: true, icon: <><ChromeLogo /><circle cx="12" cy="12.500" r="4.500" fill="#1f8276" /><circle cx="12" cy="12.500" r="3.300" fill="#ee2248" /></> },
];

function Taskbar() {
  return (
    <footer className="flex h-[27px] items-stretch bg-[#1b1b1b] text-[11px] text-[#e6e6e6]">
      <button aria-label="Start" className="flex w-8 items-center justify-center"><FaWindows size={12} color="#f2f2f2" /></button>
      <label className="flex w-[229px] items-center gap-[7px] bg-[#f1f1f1] pl-2">
        <Search size={12} color="#333" className="shrink-0 -scale-x-100" />
        <input aria-label="Search" placeholder="在這裡輸入文字來搜尋" className="w-full bg-transparent text-[11px] outline-none placeholder:text-[#555]" />
      </label>
      <div className="flex w-[654px]">
        {APPS.map((a) => (
          <button
            key={a.name}
            aria-label={a.name}
            className={"flex flex-1 flex-col items-center justify-between pt-[5px] " + (a.active ? "bg-[#4b4b4b]" : "")}
          >
            <svg viewBox="0 0 18 18" className="size-[17px]">{a.icon}</svg>
            {a.open && <span className={"h-0.5 bg-[#86b8e2] " + (a.active ? "w-full" : "w-[27px]")} />}
          </button>
        ))}
      </div>
      <div className="ml-auto flex items-center gap-1.5 pr-3.5">
        <span className="mr-1 text-[8px]">桌面</span>
        <span className="self-start text-[12px] leading-4">»</span>
        <ChevronUp size={12} className="ml-1" />
        <svg viewBox="0 0 12 12" className="size-3" fill="none" stroke="currentColor"><path d="M3.500 8.500V2.500h8v6h-5M7.500 8.500v2M5.500 10.500h4M.5 1.500h3v3h-3zM2 4.500v6" /></svg>
        <svg viewBox="0 0 12 12" className="size-3" fill="none" stroke="currentColor"><path d="M.5 4.500H2L4.500 2v8L2 7.500H.5zM6.500 4.500q1 1.500 0 3M8.300 3.500q1.500 2.500 0 5M10 2.500q2.500 3.500 0 7" /></svg>
        <svg viewBox="0 0 12 12" className="size-3" fill="none" stroke="currentColor"><path d="M4 8 10 1.500 11 3 5.500 9zM4 8c-2-3-5 0-2.500 2S7 10 6 6M8 8q3-1 3 1" /></svg>
        <span className="text-[12px]">英</span>
        <span className="ml-0.5 bg-[#eee] px-px text-[8px] leading-[10px] text-[#222]">速</span>
        <span className="w-11 text-center text-[9px] leading-[11px]">8:17<br />10/3/2020</span>
        <svg viewBox="0 0 16 16" className="size-4"><path d="M1 1.500h11v9H7L4.500 13v-2.500H1z" fill="#eee" /><path d="M3 4h7M3 6h7M3 8h4" stroke="#222" /><circle cx="11.500" cy="11" r="4" fill="#333" stroke="#ccc" /><text x="11.500" y="13.500" fontSize="7" textAnchor="middle" fill="#fff">3</text></svg>
      </div>
    </footer>
  );
}

export default function App() {
  return (
    <div className="relative flex h-screen flex-col overflow-hidden bg-white font-['Roboto','Noto_Sans_CJK_TC',sans-serif]">
      <header>
        <TabStrip />
        <AddressBar />
        <Bookmarks />
      </header>

      <main className="relative flex min-h-0 flex-1 bg-[#f1f1f1]">
        <aside className="w-[222px] shrink-0"><Palettes /></aside>
        <section className="relative flex-1 overflow-hidden border-x border-[#e25050] bg-white">
          <Worksheet />
          <Ink />
        </section>
        <aside className="w-[222px] shrink-0"><Exercises /></aside>
        <FloatingControls />
      </main>

      <div className="flex h-8 items-center bg-[#4856a8] font-[Lato] text-[12px] font-bold text-white">
        <Swirl className="ml-3 h-[22px] w-5" />
        <p className="flex-1 pl-[322px]">Welcome to Explain Everything</p>
        <a href="#signin" className="mr-px flex h-[30px] w-[220px] items-center justify-center bg-white text-[#4454a8]">Sign In</a>
      </div>

      <Taskbar />

      <div className="absolute bottom-8 left-1/2 flex h-[29px] w-[324px] -translate-x-1/2 items-center whitespace-nowrap bg-[#fcfcfd] pl-1.5 text-[9px] text-[#333] shadow-md">
        <span className="flex h-2 w-[3px] shrink-0 border-x border-[#bbb]" />
        <span className="ml-2 flex-1">Screencastify - Screen Video Recorder <span className="text-[8px]">正在共用你的畫面。</span></span>
        <button className="h-[21px] w-[53px] rounded-sm bg-[#1a6fe0] text-[8px] text-white">停止共用</button>
        <button className="px-[7px] text-[8px] text-[#1a6fe0]">隱藏</button>
      </div>
    </div>
  );
}
